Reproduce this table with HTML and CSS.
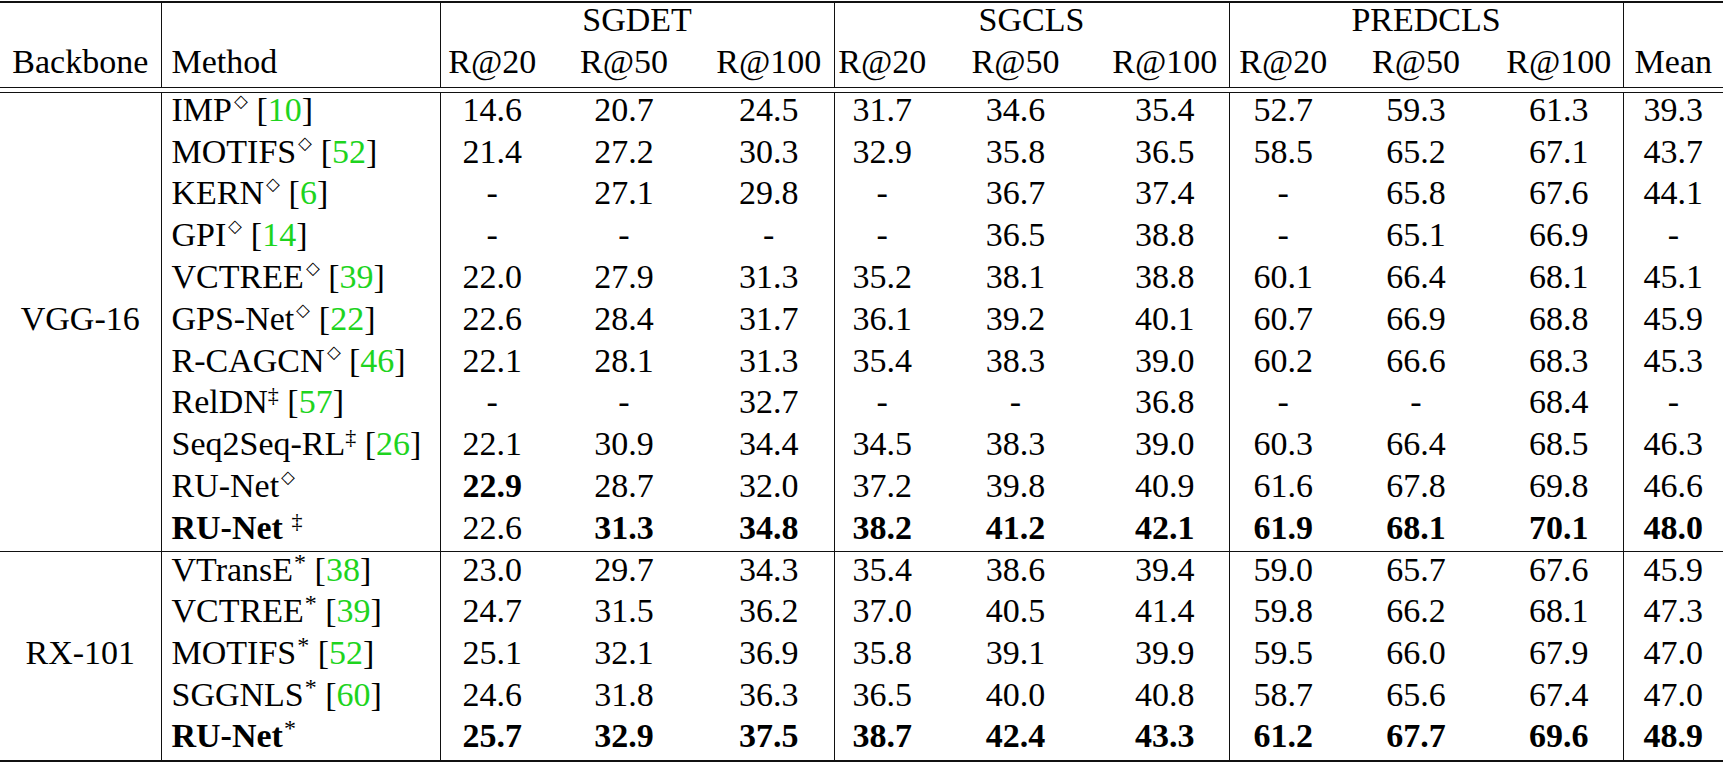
FILE: index.html
```html
<!DOCTYPE html>
<html lang="en">
<head>
    <meta charset="UTF-8">
    <title>Scene graph results</title>
    <link rel="stylesheet" href="styles.css">
</head>
<body>
    <table class="results">
        <colgroup>
            <col class="col-backbone">
            <col class="col-method">
            <col class="det-20"><col class="det-50"><col class="det-100">
            <col class="cls-20"><col class="cls-50"><col class="cls-100">
            <col class="pred-20"><col class="pred-50"><col class="pred-100">
            <col class="col-mean">
        </colgroup>
        <thead>
            <tr class="head-top">
                <th></th>
                <th></th>
                <th colspan="3">SGDET</th>
                <th colspan="3">SGCLS</th>
                <th colspan="3">PREDCLS</th>
                <th></th>
            </tr>
            <tr class="head-sub">
                <th>Backbone</th>
                <th class="method">Method</th>
                <th>R@20</th><th>R@50</th><th>R@100</th>
                <th>R@20</th><th>R@50</th><th>R@100</th>
                <th>R@20</th><th>R@50</th><th>R@100</th>
                <th>Mean</th>
            </tr>
            <tr class="gap"><td colspan="12"></td></tr>
        </thead>
        <tbody class="group">
            <tr>
                <td rowspan="11">VGG-16</td>
                <td class="method">IMP<sup class="dia">◇</sup> [<span class="cite">10</span>]</td>
                <td>14.6</td><td>20.7</td><td>24.5</td>
                <td>31.7</td><td>34.6</td><td>35.4</td>
                <td>52.7</td><td>59.3</td><td>61.3</td>
                <td>39.3</td>
            </tr>
            <tr>
                <td class="method">MOTIFS<sup class="dia">◇</sup> [<span class="cite">52</span>]</td>
                <td>21.4</td><td>27.2</td><td>30.3</td>
                <td>32.9</td><td>35.8</td><td>36.5</td>
                <td>58.5</td><td>65.2</td><td>67.1</td>
                <td>43.7</td>
            </tr>
            <tr>
                <td class="method">KERN<sup class="dia">◇</sup> [<span class="cite">6</span>]</td>
                <td>-</td><td>27.1</td><td>29.8</td>
                <td>-</td><td>36.7</td><td>37.4</td>
                <td>-</td><td>65.8</td><td>67.6</td>
                <td>44.1</td>
            </tr>
            <tr>
                <td class="method">GPI<sup class="dia">◇</sup> [<span class="cite">14</span>]</td>
                <td>-</td><td>-</td><td>-</td>
                <td>-</td><td>36.5</td><td>38.8</td>
                <td>-</td><td>65.1</td><td>66.9</td>
                <td>-</td>
            </tr>
            <tr>
                <td class="method">VCTREE<sup class="dia">◇</sup> [<span class="cite">39</span>]</td>
                <td>22.0</td><td>27.9</td><td>31.3</td>
                <td>35.2</td><td>38.1</td><td>38.8</td>
                <td>60.1</td><td>66.4</td><td>68.1</td>
                <td>45.1</td>
            </tr>
            <tr>
                <td class="method">GPS-Net<sup class="dia">◇</sup> [<span class="cite">22</span>]</td>
                <td>22.6</td><td>28.4</td><td>31.7</td>
                <td>36.1</td><td>39.2</td><td>40.1</td>
                <td>60.7</td><td>66.9</td><td>68.8</td>
                <td>45.9</td>
            </tr>
            <tr>
                <td class="method">R-CAGCN<sup class="dia">◇</sup> [<span class="cite">46</span>]</td>
                <td>22.1</td><td>28.1</td><td>31.3</td>
                <td>35.4</td><td>38.3</td><td>39.0</td>
                <td>60.2</td><td>66.6</td><td>68.3</td>
                <td>45.3</td>
            </tr>
            <tr>
                <td class="method">RelDN<sup class="dag">‡</sup> [<span class="cite">57</span>]</td>
                <td>-</td><td>-</td><td>32.7</td>
                <td>-</td><td>-</td><td>36.8</td>
                <td>-</td><td>-</td><td>68.4</td>
                <td>-</td>
            </tr>
            <tr>
                <td class="method">Seq2Seq-RL<sup class="dag">‡</sup> [<span class="cite">26</span>]</td>
                <td>22.1</td><td>30.9</td><td>34.4</td>
                <td>34.5</td><td>38.3</td><td>39.0</td>
                <td>60.3</td><td>66.4</td><td>68.5</td>
                <td>46.3</td>
            </tr>
            <tr>
                <td class="method">RU-Net<sup class="dia">◇</sup></td>
                <td><b>22.9</b></td><td>28.7</td><td>32.0</td>
                <td>37.2</td><td>39.8</td><td>40.9</td>
                <td>61.6</td><td>67.8</td><td>69.8</td>
                <td>46.6</td>
            </tr>
            <tr>
                <td class="method"><b>RU-Net</b> <sup class="dag">‡</sup></td>
                <td>22.6</td><td><b>31.3</b></td><td><b>34.8</b></td>
                <td><b>38.2</b></td><td><b>41.2</b></td><td><b>42.1</b></td>
                <td><b>61.9</b></td><td><b>68.1</b></td><td><b>70.1</b></td>
                <td><b>48.0</b></td>
            </tr>
        </tbody>
        <tbody>
            <tr>
                <td rowspan="5">RX-101</td>
                <td class="method">VTransE<sup class="ast">*</sup> [<span class="cite">38</span>]</td>
                <td>23.0</td><td>29.7</td><td>34.3</td>
                <td>35.4</td><td>38.6</td><td>39.4</td>
                <td>59.0</td><td>65.7</td><td>67.6</td>
                <td>45.9</td>
            </tr>
            <tr>
                <td class="method">VCTREE<sup class="ast">*</sup> [<span class="cite">39</span>]</td>
                <td>24.7</td><td>31.5</td><td>36.2</td>
                <td>37.0</td><td>40.5</td><td>41.4</td>
                <td>59.8</td><td>66.2</td><td>68.1</td>
                <td>47.3</td>
            </tr>
            <tr>
                <td class="method">MOTIFS<sup class="ast">*</sup> [<span class="cite">52</span>]</td>
                <td>25.1</td><td>32.1</td><td>36.9</td>
                <td>35.8</td><td>39.1</td><td>39.9</td>
                <td>59.5</td><td>66.0</td><td>67.9</td>
                <td>47.0</td>
            </tr>
            <tr>
                <td class="method">SGGNLS<sup class="ast">*</sup> [<span class="cite">60</span>]</td>
                <td>24.6</td><td>31.8</td><td>36.3</td>
                <td>36.5</td><td>40.0</td><td>40.8</td>
                <td>58.7</td><td>65.6</td><td>67.4</td>
                <td>47.0</td>
            </tr>
            <tr>
                <td class="method"><b>RU-Net</b><sup class="ast">*</sup></td>
                <td><b>25.7</b></td><td><b>32.9</b></td><td><b>37.5</b></td>
                <td><b>38.7</b></td><td><b>42.4</b></td><td><b>43.3</b></td>
                <td><b>61.2</b></td><td><b>67.7</b></td><td><b>69.6</b></td>
                <td><b>48.9</b></td>
            </tr>
        </tbody>
    </table>
</body>
</html>
```

FILE: styles.css
```css
body {
    margin: 0;
    background-color: #fff;
    color: #000;
    font-family: "Liberation Serif", serif;
}
.results {
    border-collapse: collapse;
    table-layout: fixed;
    width: 1723px;
    margin-top: 1px;
    font-size: 34px;
    border-top: 2px solid #111;
    border-bottom: 2px solid #111;
}
/* column widths, group ends carry the vertical rules */
.col-backbone { width: 161px; border-right: 1px solid #111; }
.col-method { width: 279px; border-right: 1px solid #111; }
.det-20 { width: 104px; }
.det-50 { width: 160px; }
.det-100 { width: 130px; border-right: 1px solid #111; }
.cls-20 { width: 96px; }
.cls-50 { width: 171px; }
.cls-100 { width: 128px; border-right: 1px solid #111; }
.pred-20 { width: 108px; }
.pred-50 { width: 158px; }
.pred-100 { width: 128px; border-right: 1px solid #111; }
.col-mean { width: 100px; }

th, td {
    padding: 0 0 6px 0;
    text-align: center;
    vertical-align: middle;
    font-weight: normal;
    line-height: 34px;
    white-space: nowrap;
}
b { font-weight: bold; }
.head-top { height: 40px; }
.head-sub { height: 44px; }
.head-sub th { border-bottom: 1px solid #111; }
.gap td {
    height: 4px;
    padding: 0;
    line-height: 0;
    font-size: 0;
    border-bottom: 1px solid #111;
}
tbody tr { height: 41.8px; }
.group { border-bottom: 1px solid #111; }
.method {
    text-align: left;
    padding-left: 10px;
}
.cite { color: #1ed41e; }
sup {
    line-height: 0;
    vertical-align: baseline;
    position: relative;
}
.dia {
    font-size: 18px;
    top: -14px;
    margin-left: 2px;
}
.dag {
    font-size: 22px;
    top: -11px;
}
.ast {
    font-size: 24px;
    top: -11px;
    margin-left: 1px;
}
```
